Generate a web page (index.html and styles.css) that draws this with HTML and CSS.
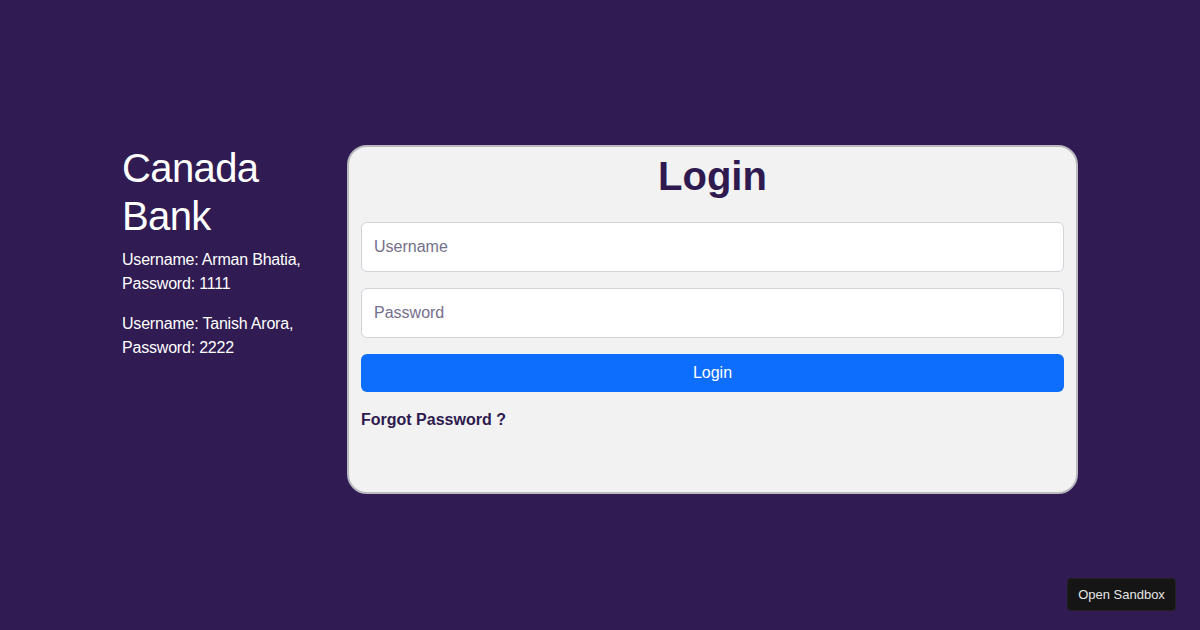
FILE: index.html
```html
<!DOCTYPE html>
<html lang="en">
<head>
<meta charset="utf-8">
<title>Canada Bank</title>
<link rel="stylesheet" href="styles.css">
</head>
<body>
<main class="page">
  <section class="info">
    <h1 class="brand">Canada Bank</h1>
    <p class="cred">Username: Arman Bhatia, Password: 1111</p>
    <p class="cred">Username: Tanish Arora, Password: 2222</p>
  </section>
  <section class="card">
    <h1 class="card-title">Login</h1>
    <form class="form">
      <input class="field" type="text" placeholder="Username">
      <input class="field" type="password" placeholder="Password">
      <button class="btn" type="button">Login</button>
    </form>
    <a class="forgot" href="#">Forgot Password ?</a>
  </section>
</main>
<button class="sandbox" type="button">Open Sandbox</button>
</body>
</html>
```
FILE: styles.css
```css
html, body {
  margin: 0;
  padding: 0;
  height: 100%;
}
body {
  background: #301b52;
  font-family: "Liberation Sans", Arial, sans-serif;
  font-size: 16px;
  line-height: 1.5;
  color: #ffffff;
  overflow: hidden;
}
.page {
  display: flex;
  align-items: flex-start;
  padding: 144px 0 0 122px;
}
.info {
  width: 225px;
  flex: none;
}
.brand {
  margin: 0 0 8px;
  font-size: 40px;
  font-weight: 400;
  line-height: 48px;
  letter-spacing: -0.6px;
  width: 180px;
}
.cred {
  margin: 0 0 16px;
  letter-spacing: -0.2px;
  width: 200px;
}
.card {
  width: 731px;
  height: 349px;
  box-sizing: border-box;
  margin-top: 1px;
  background: #f2f2f2;
  border: 2px solid #b9b9bf;
  border-radius: 20px;
  padding: 5px 12px 0;
}
.card-title {
  margin: 0 0 22px;
  text-align: center;
  font-size: 40px;
  font-weight: 700;
  line-height: 48px;
  color: #2e1a4f;
}
.form {
  display: flex;
  flex-direction: column;
  gap: 16px;
}
.field {
  display: block;
  box-sizing: border-box;
  width: 100%;
  height: 50px;
  padding: 12px;
  border: 1px solid #d2d4da;
  border-radius: 6px;
  background: #ffffff;
  font-family: inherit;
  font-size: 16px;
  color: #212529;
  outline: none;
}
.field::placeholder {
  color: #756f8a;
}
.btn {
  display: block;
  width: 100%;
  height: 38px;
  border: none;
  border-radius: 6px;
  background: #0d6efd;
  color: #ffffff;
  font-family: inherit;
  font-size: 16px;
  line-height: 24px;
  cursor: pointer;
}
.forgot {
  display: inline-block;
  margin-top: 16px;
  color: #2e1a4f;
  font-weight: 700;
  text-decoration: none;
}
.sandbox {
  position: fixed;
  right: 24px;
  bottom: 19px;
  width: 109px;
  height: 33px;
  border: 1px solid #222;
  border-radius: 4px;
  background: #151515;
  color: #e6e6e6;
  font-family: "Liberation Sans", Arial, sans-serif;
  font-size: 13px;
  padding: 0;
}
```
